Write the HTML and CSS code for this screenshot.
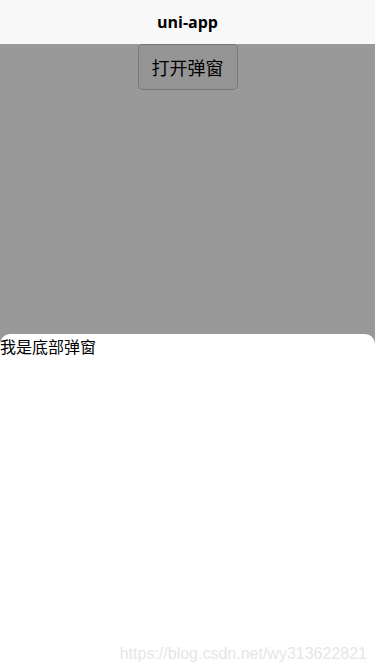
FILE: index.html
```html
<!DOCTYPE html>
<html lang="zh-CN">
<head>
<meta charset="utf-8">
<meta name="viewport" content="width=375">
<link rel="stylesheet" href="styles.css">
</head>
<body>
<div class="app">
  <header class="navbar">uni-app</header>
  <main class="page">
    <button class="btn">打开弹窗</button>
  </main>
  <div class="mask"></div>
  <div class="popup">
    <div class="popup-text">我是底部弹窗</div>
    <div class="watermark">https://blog.csdn.net/wy313622821</div>
  </div>
</div>
</body>
</html>
```
FILE: styles.css
```css
html, body {
  margin: 0;
  padding: 0;
  height: 100%;
}
body {
  font-family: "Noto Sans CJK SC", "Noto Sans", sans-serif;
  color: #000;
  background: #fff;
}
.app {
  position: relative;
  width: 375px;
  height: 667px;
  overflow: hidden;
}
.navbar {
  height: 44px;
  background: #f8f8f8;
  display: flex;
  align-items: center;
  justify-content: center;
  font-size: 16px;
  font-weight: 700;
  font-family: "Open Sans", "Noto Sans CJK SC", sans-serif;
}
.page {
  display: flex;
  justify-content: center;
}
.btn {
  box-sizing: border-box;
  height: 46px;
  padding: 0 13px;
  white-space: nowrap;
  font-size: 18px;
  font-family: "Noto Sans CJK SC", sans-serif;
  color: #000;
  background: #f8f8f8;
  border: 1px solid rgba(0, 0, 0, 0.2);
  border-radius: 5px;
  line-height: 44px;
}
.mask {
  position: absolute;
  left: 0;
  right: 0;
  top: 44px;
  bottom: 0;
  background: rgba(0, 0, 0, 0.4);
}
.popup {
  position: absolute;
  left: 0;
  right: 0;
  bottom: 0;
  height: 333px;
  background: #fff;
  border-radius: 10px 10px 0 0;
}
.popup-text {
  font-size: 16px;
  line-height: 24px;
}
.watermark {
  position: absolute;
  right: 8px;
  bottom: 4px;
  font-family: "Liberation Sans", Arial, sans-serif;
  font-size: 16px;
  color: #e6e6e6;
}
```
